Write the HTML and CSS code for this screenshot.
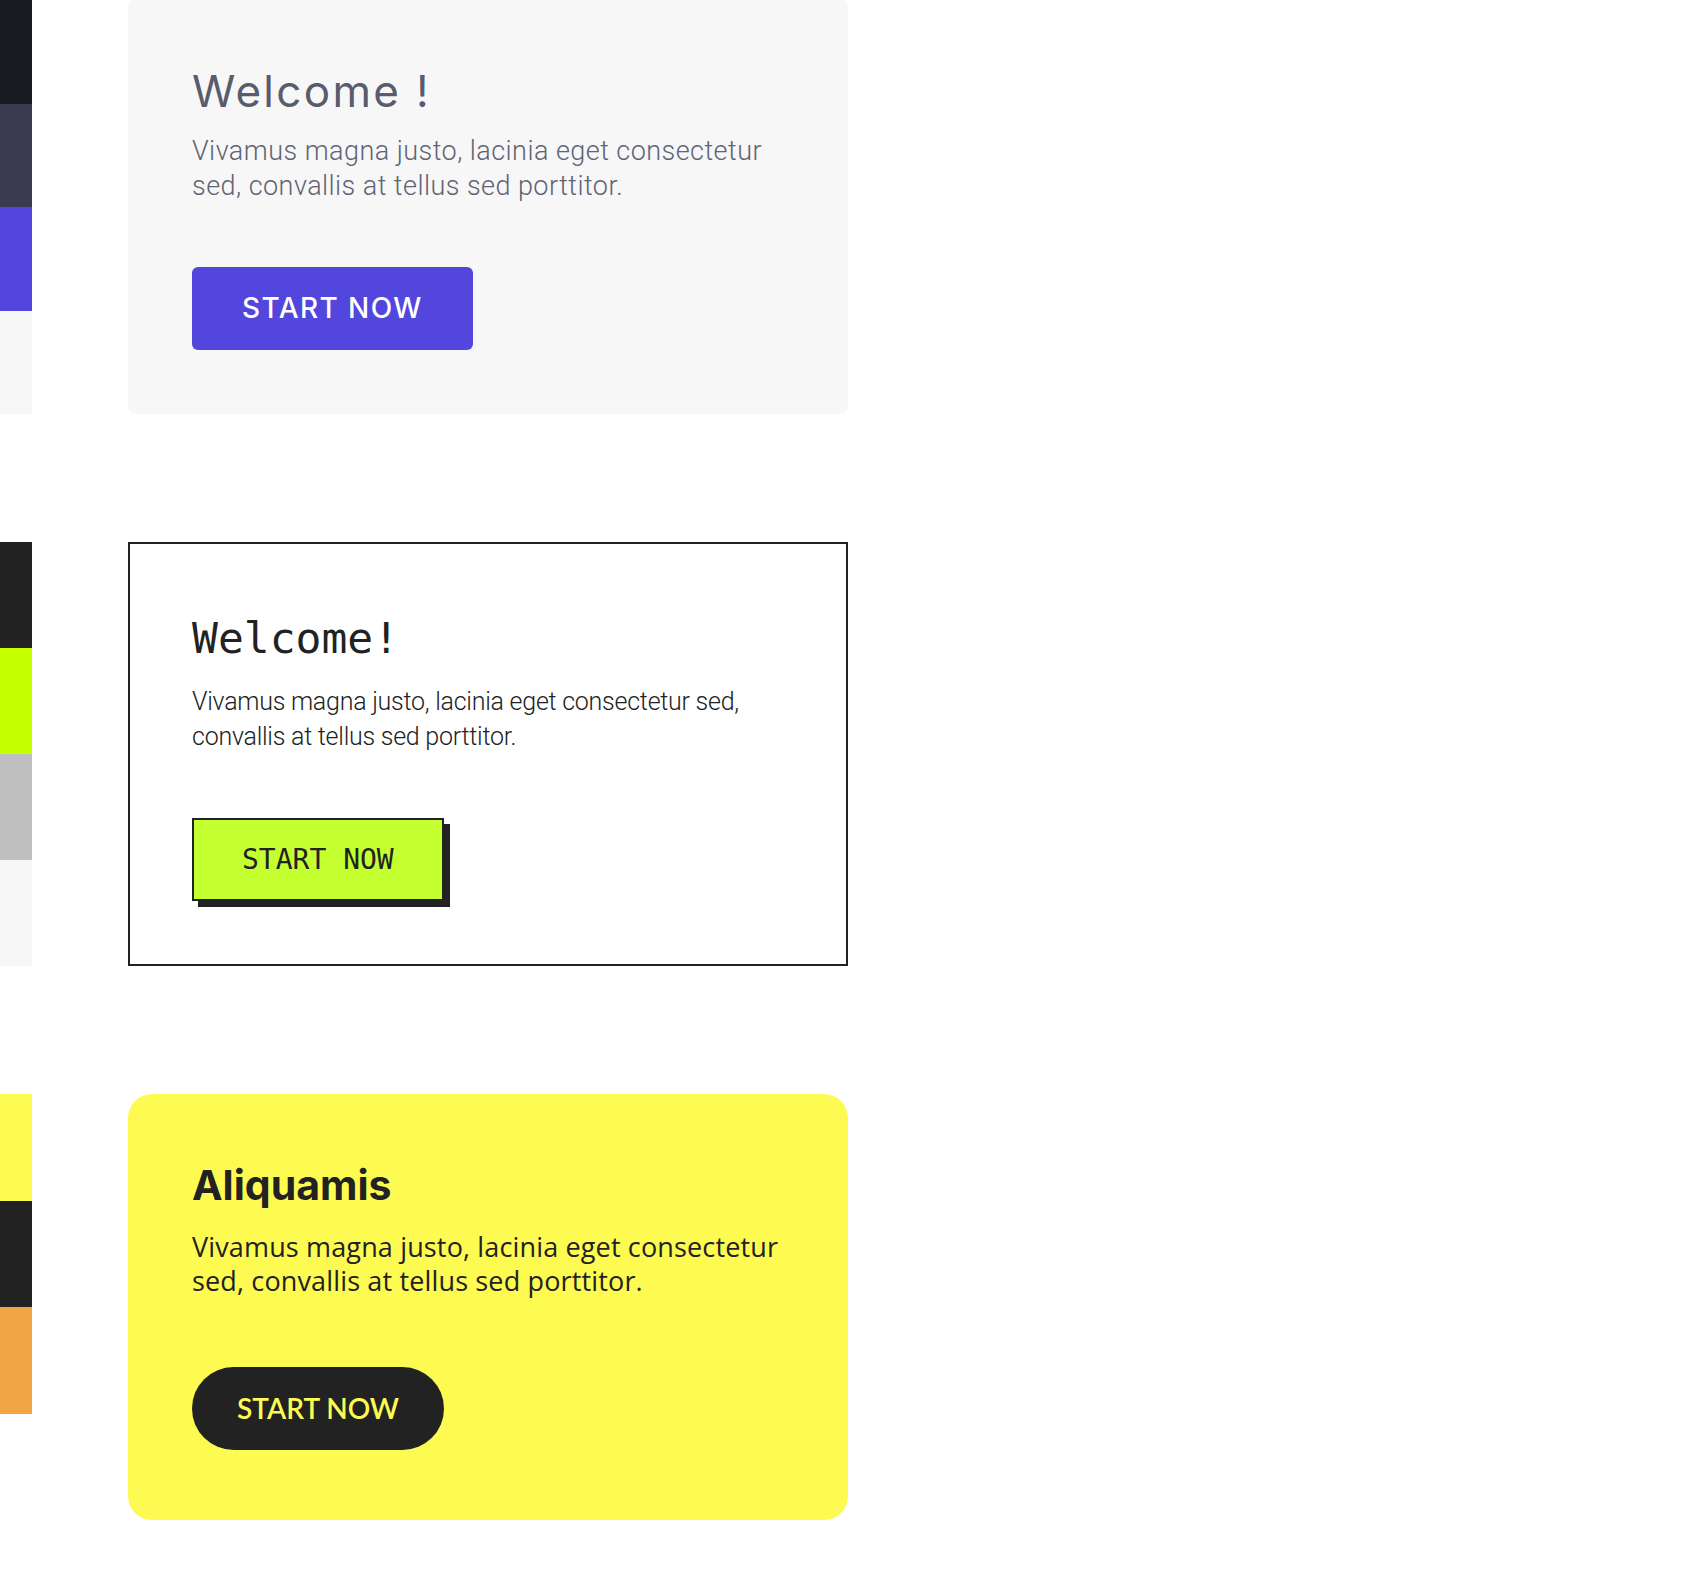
FILE: index.html
```html
<!DOCTYPE html>
<html lang="en">
<head>
  <meta charset="UTF-8" />
  <meta name="viewport" content="width=device-width, initial-scale=1.0" />
  <title>Hero card themes</title>
  <link rel="stylesheet" href="styles.css">
</head>
<body>

<main class="themes">

  <!-- theme 1 : soft / indigo -->
  <section class="theme soft">
    <div class="swatches">
      <span class="sw"></span><span class="sw"></span><span class="sw"></span><span class="sw"></span>
    </div>
    <div class="card">
      <h2>Welcome !</h2>
      <p>Vivamus magna justo, lacinia eget consectetur sed, convallis at tellus sed porttitor.</p>
      <a class="btn" href="#">START NOW</a>
    </div>
  </section>

  <!-- theme 2 : brutal / lime -->
  <section class="theme brutal">
    <div class="swatches">
      <span class="sw"></span><span class="sw"></span><span class="sw"></span><span class="sw"></span>
    </div>
    <div class="card">
      <h2>Welcome!</h2>
      <p>Vivamus magna justo, lacinia eget consectetur sed, convallis at tellus sed porttitor.</p>
      <a class="btn" href="#">START NOW</a>
    </div>
  </section>

  <!-- theme 3 : sunny / pill -->
  <section class="theme sunny">
    <div class="swatches">
      <span class="sw"></span><span class="sw"></span><span class="sw"></span>
    </div>
    <div class="card">
      <h2>Aliquamis</h2>
      <p>Vivamus magna justo, lacinia eget consectetur sed, convallis at tellus sed porttitor.</p>
      <a class="btn" href="#">START NOW</a>
    </div>
  </section>

</main>

</body>
</html>
```

FILE: styles.css
```css
*       { box-sizing:border-box; margin:0; padding:0; }
body    { background:#fff; color:#222; }
.themes { padding-bottom:64px; }

/* one row = palette column + card */
.theme  { display:grid; grid-template-columns:32px 720px; column-gap:96px; margin-bottom:128px; }
.theme:last-child { margin-bottom:0; }
.swatches { display:grid; grid-template-rows:repeat(4, 1fr); }

.card   { padding:64px; }
.card h2 { font-weight:400; }
.card p  { margin:0; }
.btn    { display:inline-block; text-decoration:none; line-height:35px; }

/* ---- soft ---- */
.soft .sw:nth-child(1) { background:#1b1c22; }
.soft .sw:nth-child(2) { background:#3c3a50; }
.soft .sw:nth-child(3) { background:#5246dd; }
.soft .sw:nth-child(4) { background:#f7f7f7; }
.soft .card { background:#f7f7f7; border-radius:8px; }
.soft h2 { font-family:Inter,sans-serif; font-size:44px; color:#585c6c; letter-spacing:2.3px; margin-bottom:16px; }
.soft p  { font-family:Roboto,sans-serif; font-weight:300; font-size:27px; line-height:35px;
           letter-spacing:.45px; color:#606374; margin-bottom:63px; }
.soft .btn { background:#5246dd; color:#fff; border-radius:6px; padding:24px 50px;
             font-family:Inter,sans-serif; font-weight:500; font-size:28px; letter-spacing:1.4px; }

/* ---- brutal ---- */
.brutal .sw:nth-child(1) { background:#222; }
.brutal .sw:nth-child(2) { background:#c6ff00; }
.brutal .sw:nth-child(3) { background:#bfbfbf; }
.brutal .sw:nth-child(4) { background:#f7f7f7; }
.brutal .card { border:2px solid #222; padding:62px 62px 63px; }
.brutal h2 { font-family:'DejaVu Sans Mono',monospace; font-size:43px; line-height:64px; color:#222; }
.brutal p  { font-family:Roboto,sans-serif; font-weight:300; font-size:25px; letter-spacing:-.25px;
             line-height:35px; color:#222; margin:14px 0 64px; }
.brutal .btn { background:#c4ff2f; color:#222; border:2px solid #222; padding:22px 48px;
               box-shadow:6px 6px 0 #222; font-family:'DejaVu Sans Mono',monospace; font-size:28px; }

/* ---- sunny ---- */
.sunny .sw:nth-child(1) { background:#fdfa52; }
.sunny .sw:nth-child(2) { background:#222; }
.sunny .sw:nth-child(3) { background:#f0a545; }
.sunny .card { background:#fdfa52; border-radius:24px; padding:65px 64px 70px; }
.sunny h2 { font-family:Inter,sans-serif; font-weight:700; font-size:41px; line-height:53px; color:#222; }
.sunny p  { font-family:'Open Sans',sans-serif; font-weight:500; font-size:27px; line-height:34px;
            letter-spacing:.15px; color:#222; margin:18px 0 69px; }
.sunny .btn { background:#222; color:#fdfa52; border-radius:42px; padding:24px 45px;
              font-family:Lato,sans-serif; font-weight:600; font-size:28px; }
```
